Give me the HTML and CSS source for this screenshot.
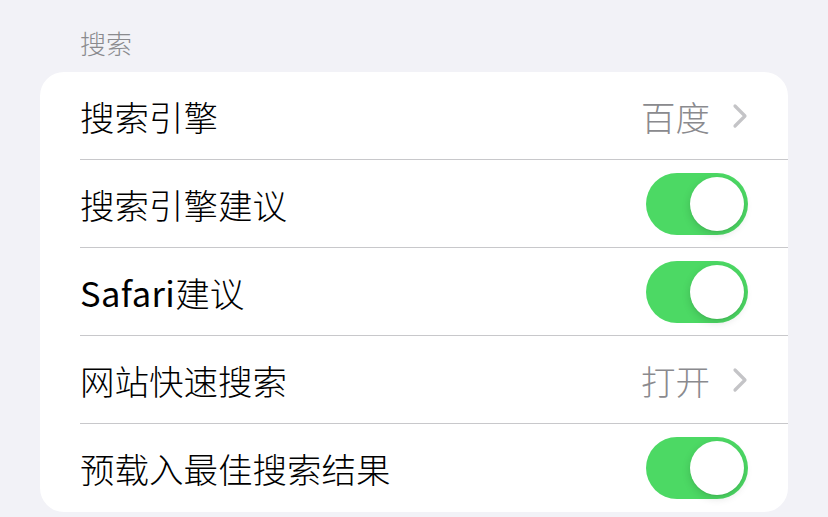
FILE: index.html
```html
<!DOCTYPE html>
<html lang="zh">
<head>
<meta charset="utf-8">
<link rel="stylesheet" href="styles.css">
</head>
<body>
<div class="page">
  <div class="section-title">搜索</div>
  <div class="card">
    <div class="row">
      <span class="label">搜索引擎</span>
      <span class="value">百度<svg class="chev" viewBox="0 0 16 26" width="16" height="26"><path d="M3 3 L13 13 L3 23" fill="none" stroke="#c4c4c7" stroke-width="3.2" stroke-linecap="round" stroke-linejoin="round"/></svg></span>
    </div>
    <div class="row">
      <span class="label">搜索引擎建议</span>
      <span class="toggle"><span class="knob"></span></span>
    </div>
    <div class="row">
      <span class="label"><span class="latin">Safari</span>建议</span>
      <span class="toggle"><span class="knob"></span></span>
    </div>
    <div class="row">
      <span class="label">网站快速搜索</span>
      <span class="value">打开<svg class="chev" viewBox="0 0 16 26" width="16" height="26"><path d="M3 3 L13 13 L3 23" fill="none" stroke="#c4c4c7" stroke-width="3.2" stroke-linecap="round" stroke-linejoin="round"/></svg></span>
    </div>
    <div class="row">
      <span class="label">预载入最佳搜索结果</span>
      <span class="toggle"><span class="knob"></span></span>
    </div>
  </div>
</div>
</body>
</html>
```

FILE: styles.css
```css
html, body {
  margin: 0;
  padding: 0;
  background: #f2f2f7;
  font-family: "Noto Sans CJK SC", "Noto Sans", sans-serif;
}
.page {
  padding: 0 40px;
  height: 517px;
  overflow: hidden;
}
.section-title {
  height: 72px;
  box-sizing: border-box;
  padding: 26px 0 0 40px;
  font-size: 26px;
  line-height: 34px;
  color: #8a8a8e;
  font-weight: 300;
}
.card {
  background: #ffffff;
  border-radius: 24px;
  overflow: hidden;
}
.row {
  display: flex;
  align-items: center;
  justify-content: space-between;
  height: 88px;
  margin-left: 40px;
  padding-right: 40px;
  box-sizing: border-box;
  border-bottom: 1px solid #c8c8cb;
}
.row:last-child {
  border-bottom: none;
}
.label {
  font-size: 34.5px;
  color: #000000;
  line-height: 40px;
  font-weight: 300;
}
.latin {
  font-weight: 400;
  letter-spacing: 0.4px;
}
.value {
  display: flex;
  align-items: center;
  font-size: 34.5px;
  color: #8a8a8e;
  line-height: 40px;
  font-weight: 300;
}
.chev {
  margin-left: 22px;
}
.toggle {
  display: flex;
  justify-content: flex-end;
  align-items: center;
  width: 102px;
  height: 62px;
  border-radius: 31px;
  background: #4cd964;
  box-sizing: border-box;
  padding: 4px;
}
.knob {
  width: 54px;
  height: 54px;
  border-radius: 50%;
  background: #ffffff;
  box-shadow: 0 3px 8px rgba(0,0,0,0.15), 0 1px 1px rgba(0,0,0,0.06);
}
```
